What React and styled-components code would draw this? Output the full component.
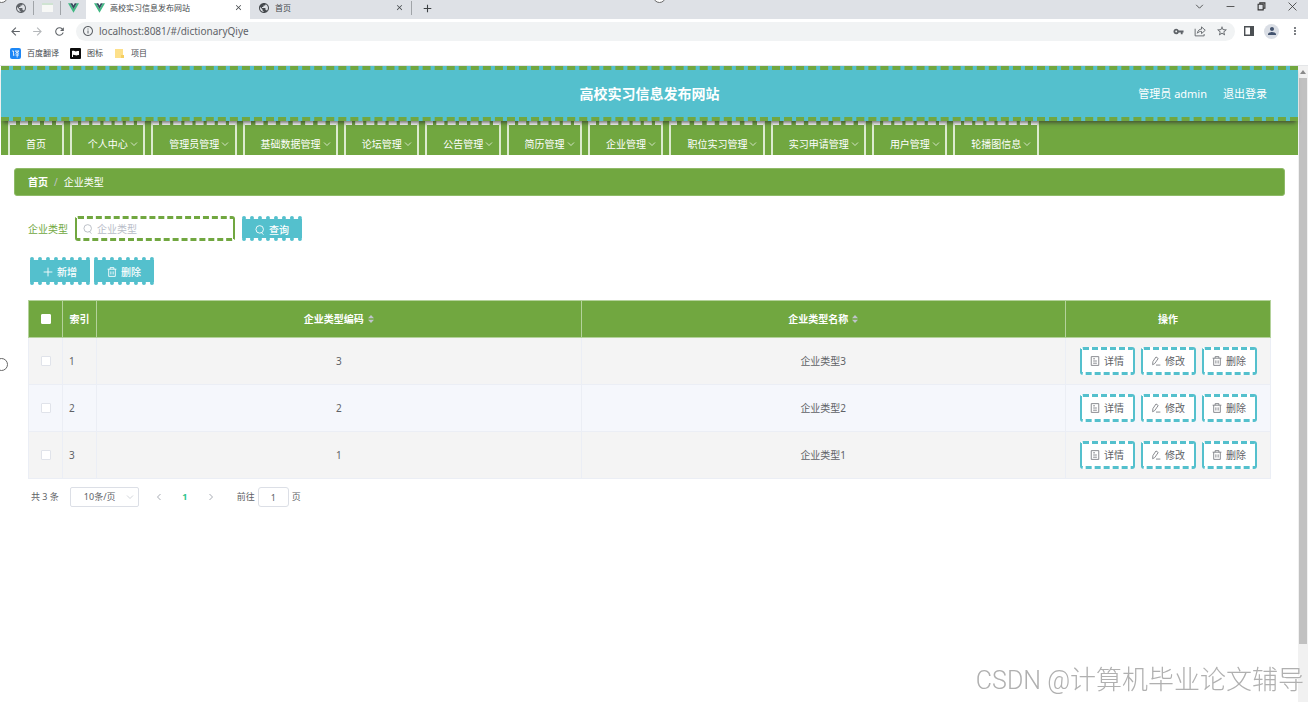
import { useState } from "react";
import styled, { createGlobalStyle, css } from "styled-components";
import {
  MdPublic,
  MdClose,
  MdAdd,
  MdArrowBack,
  MdArrowForward,
  MdRefresh,
  MdInfoOutline,
  MdVpnKey,
  MdStarBorder,
  MdPerson,
  MdMoreVert,
} from "react-icons/md";

const green = "#71a740";
const teal = "#54c0cd";

const GlobalStyle = createGlobalStyle`
  * {
    box-sizing: border-box;
  }

  body {
    margin: 0;
    background: #fff;
    color: #606266;
    font-family: "Noto Sans", "Noto Sans CJK SC", sans-serif;
    font-size: 10px;
    line-height: 14px;
  }

  button, input, select {
    font: inherit;
    color: inherit;
  }

  button {
    padding: 0;
    border: 0;
    background: none;
    cursor: pointer;
  }

  a {
    color: inherit;
    text-decoration: none;
  }

  svg {
    display: block;
    flex: none;
  }
`;

const Window = styled.div`
  display: flex;
  flex-direction: column;
  min-height: 100vh;
`;

/* ---------- browser ---------- */

const TabStrip = styled.div`
  display: flex;
  height: 19px;
  padding-left: 7px;
  background: #dee1e6;
  color: #5f6368;
  font-size: 8px;
`;

const PinnedTab = styled.button`
  display: flex;
  justify-content: center;
  align-items: center;
  width: 27px;
  padding-bottom: 4px;
  position: relative;

  &:nth-child(3) {
    width: 25px;
  }

  &:not(:nth-child(3))::after {
    content: "";
    position: absolute;
    right: 0;
    top: 1px;
    width: 1px;
    height: 14px;
    background: #a0a4a8;
  }
`;

const Tab = styled.div`
  display: flex;
  align-items: center;
  gap: 5px;
  width: ${p => (p.$active ? 164 : 161)}px;
  padding: 0 7px 4px 8px;
  background: ${p => (p.$active ? "#fff" : "transparent")};
  color: #45494d;

  span {
    flex: 1;
    white-space: nowrap;
  }
`;

const NewTab = styled.button`
  height: 14px;
  margin-top: 1px;
  padding: 0 9px;
  border-left: 1px solid #a0a4a8;
  color: #3c4043;
`;

const WindowControls = styled.div`
  display: flex;
  margin-left: auto;
  padding-bottom: 6px;

  button {
    display: flex;
    align-items: center;
    justify-content: center;
    width: 31px;
    color: #333;
  }
`;

const AddressBar = styled.div`
  display: flex;
  align-items: center;
  height: 24px;
  padding: 0 7px 0 9px;
  color: #5f6368;
`;

const NavButtons = styled.div`
  display: flex;
  gap: 9px;
  margin-right: 10px;

  button:nth-child(2) {
    color: #b4b7ba;
  }
`;

const UrlBox = styled.div`
  flex: 1;
  display: flex;
  align-items: center;
  gap: 5px;
  height: 19px;
  padding: 0 7px 0 6px;
  border-radius: 10px;
  background: #f1f3f4;
`;

const UrlInput = styled.input`
  flex: 1;
  min-width: 0;
  padding: 0;
  border: 0;
  outline: 0;
  background: none;
  font-size: 10px;
`;

const IconGroup = styled.div`
  display: flex;
  align-items: center;
  gap: 10px;
`;

const BrowserActions = styled(IconGroup)`
  margin-left: 9px;
`;

const Avatar = styled.button`
  display: grid;
  place-items: center;
  width: 15px;
  height: 15px;
  border-radius: 50%;
  background: #dadee5;
  color: #44546f;
`;

const Bookmarks = styled.div`
  display: flex;
  align-items: center;
  gap: 11px;
  height: 23px;
  padding: 0 10px 2px;
  border-bottom: 1px solid #e4e6e8;
  color: #45494d;
  font-size: 8px;

  a {
    display: flex;
    align-items: center;
    gap: 6px;
  }
`;

/* ---------- site ---------- */

const Viewport = styled.div`
  flex: 1;
  display: flex;
  padding-left: 1px;
`;

const Site = styled.div`
  flex: 1;
  min-width: 0;
`;

const Header = styled.header`
  display: grid;
  grid-template-columns: 1fr auto 1fr;
  align-items: center;
  height: 55px;
  padding: 0 31px;
  border: dashed ${green};
  border-width: 4px 0;
  background: ${teal};
  box-shadow: 0 4px 4px -2px rgba(50, 50, 50, 0.7);
  color: #fff;
  position: relative;
`;

const SiteTitle = styled.h1`
  grid-column: 2;
  margin: 0;
  font-size: 14px;
  line-height: 20px;
`;

const UserArea = styled.div`
  display: flex;
  justify-content: flex-end;
  gap: 16px;
  font-size: 11px;
`;

const Menu = styled.nav`
  background: ${green};
`;

const MenuList = styled.div`
  display: flex;
  gap: 6px;
  width: 80%;
  height: 34px;
  padding-left: 7px;
`;

const MenuItem = styled.a`
  display: flex;
  align-items: center;
  gap: 2px;
  min-width: 0;
  padding: 8px ${p => (p.$plain ? 16 : 6)}px 0 16px;
  border: 2px solid #dcebcf;
  border-top: 4px dashed #fff;
  border-bottom: 0;
  color: #fff;
  white-space: nowrap;
`;

const Breadcrumb = styled.div`
  display: flex;
  align-items: center;
  gap: 6px;
  height: 28px;
  margin: 13px 13px 0;
  padding: 0 13px;
  border: 1px solid #8fba68;
  border-radius: 3px;
  background: ${green};
  color: #fff;

  a {
    font-weight: 700;
  }

  i {
    color: #c0c4cc;
    font-style: normal;
  }
`;

const Content = styled.main`
  padding: 20px 27px 0;
`;

const SearchForm = styled.form`
  display: flex;
  align-items: center;
  gap: 7px;

  label {
    color: ${green};
  }
`;

const SearchField = styled.div`
  display: flex;
  align-items: center;
  gap: 4px;
  width: 160px;
  height: 25px;
  padding: 0 6px;
  border: 2px solid ${green};
  border-top: 3px dashed ${green};
  border-bottom: 3px dashed ${green};
  border-radius: 3px;
  color: #b4b8c0;

  input {
    flex: 1;
    min-width: 0;
    padding: 0;
    border: 0;
    outline: 0;
    color: #606266;
  }

  input::placeholder {
    color: #b8bcc8;
    opacity: 1;
  }
`;

/* the fill runs one pixel under the dots */
const TealButton = styled.button`
  display: flex;
  align-items: center;
  justify-content: center;
  gap: 4px;
  width: 60px;
  height: ${p => (p.$small ? 25 : 28)}px;
  padding-top: ${p => (p.$small ? 3 : 1)}px;
  border: dotted ${teal};
  border-width: 4px 0;
  background: linear-gradient(${teal}, ${teal}) center / 100% calc(100% - 6px) no-repeat border-box;
  color: #fff;
  font-weight: 500;
`;

const Toolbar = styled.div`
  display: flex;
  gap: 4px;
  margin: 16px 0 15px 2px;
`;

const Table = styled.table`
  width: 100%;
  border-collapse: collapse;
  table-layout: fixed;
  text-align: center;
`;

const cell = css`
  padding: 0;
  border: 1px solid #ebeef5;
`;

const Th = styled.th`
  ${cell}
  height: 37px;
  width: ${p => (p.$width ? `${p.$width}px` : "auto")};
  border-color: #b4d29b;
  background: ${green};
  color: #fff;
  font-weight: 700;
`;

const Td = styled.td`
  ${cell}
  height: 47px;
  padding: ${p => (p.$index ? "0 6px" : 0)};
  text-align: ${p => (p.$index ? "left" : "center")};
`;

const Tr = styled.tr`
  background: #f4f4f4;

  &:nth-child(even) {
    background: #f5f7fc;
  }
`;

const SortHead = styled.button`
  display: inline-flex;
  align-items: center;
  gap: 4px;
  font-weight: 700;
`;

const Check = styled.input`
  appearance: none;
  display: block;
  width: 10px;
  height: 10px;
  margin: 0 auto;
  border: 1px solid ${p => (p.$head ? "#fff" : "#e0e3ea")};
  border-radius: 1px;
  background: #fff;

  &:checked {
    background: ${teal};
  }
`;

const RowActions = styled.div`
  display: flex;
  justify-content: center;
  gap: 6px;
`;

const RowButton = styled.button`
  display: flex;
  align-items: center;
  justify-content: center;
  gap: 4px;
  width: 55px;
  height: 28px;
  border: 2px solid ${teal};
  border-top: 3px dashed ${teal};
  border-bottom: 3px dashed ${teal};
  border-radius: 3px;
  background: #fff;

  svg {
    color: #7a7d82;
  }
`;

const Pagination = styled.div`
  display: flex;
  align-items: center;
  height: 20px;
  margin-top: 8px;
  padding-left: 3px;
  font-size: 9px;
`;

const SizeSelect = styled.div`
  display: grid;
  align-items: center;
  width: 69px;
  height: 20px;
  margin: 0 11px;

  select, svg {
    grid-area: 1 / 1;
  }

  select {
    appearance: none;
    height: 20px;
    padding: 0 0 0 13px;
    border: 1px solid #dcdfe6;
    border-radius: 2px;
    background: #fff;
  }

  svg {
    justify-self: end;
    margin-right: 5px;
    color: #c0c4cc;
    pointer-events: none;
  }
`;

const PageButton = styled.button`
  display: grid;
  place-items: center;
  width: 18px;
  margin-right: 8px;
  color: ${p => (p.$active ? "#2fc48d" : "#a8acb4")};
  font-weight: 700;
`;

const Jump = styled.label`
  display: flex;
  align-items: center;
  gap: 3px;
  margin-left: 9px;

  input {
    width: 31px;
    height: 20px;
    padding: 0;
    border: 1px solid #dcdfe6;
    border-radius: 3px;
    text-align: center;
  }
`;

const Scrollbar = styled.div`
  display: flex;
  flex-direction: column;
  align-items: center;
  width: 10px;
  padding-bottom: 58px;
  background: #f1f1f1;

  svg {
    height: 12px;
  }

  &::after {
    content: "";
    flex: 1;
    width: 8px;
    background: #c1c1c1;
  }
`;

const Watermark = styled.div`
  position: fixed;
  right: 4px;
  bottom: 3px;
  color: #b0b0b0;
  font-family: Roboto, "Noto Sans CJK SC", sans-serif;
  font-size: 26px;
  font-weight: 300;
  line-height: 36px;
  text-shadow: -1px -1px 0 #fff;
  pointer-events: none;

  span {
    font-size: 25px;
  }
`;

/* round grips on the window edge */
const Grip = styled.i`
  position: fixed;
  left: ${p => p.$x};
  top: ${p => p.$y};
  width: 13px;
  height: 13px;
  margin: -7px 0 0 -6px;
  border: 1px solid #666;
  border-radius: 50%;
  background: #fff;
`;

/* ---------- icons ---------- */

const Line = ({ size = 10, box = 16, children }) => (
  <svg
    width={size}
    height={size}
    viewBox={`0 0 ${box} ${box}`}
    fill="none"
    stroke="currentColor"
    strokeWidth="1.4"
    aria-hidden="true"
  >
    {children}
  </svg>
);

const Chevron = ({ size = 8 }) => (
  <Line size={size}><path d="M2 5l6 6 6-6" /></Line>
);

const Search = () => (
  <Line><circle cx="7.5" cy="7" r="6" /><path d="M10.500 12.500l3 3" /></Line>
);

const Plus = () => (
  <Line><path d="M8 1v14M1 8h14" /></Line>
);

const Trash = () => (
  <Line>
    <path d="M1 3.5h14M5 3.5V1h6v2.5M2.7 3.5V15h10.6V3.5M6.2 7v5M9.8 7v5" />
  </Line>
);

const Doc = () => (
  <Line>
    <path d="M2 1h12v14H2zM5 4.5h3M5 8h6M5 11.5h6" />
  </Line>
);

const Edit = () => (
  <Line>
    <path d="M3 9l5-7.5 3.500 2.500-5.500 8L2.600 14zM8 14.500h7" />
  </Line>
);

const Sort = () => (
  <svg width="6" height="8" viewBox="0 0 6 8" fill="#c0c4cc" aria-hidden="true">
    <path d="M3 0l3 3.3H0zM3 8l3-3.3H0z" />
  </svg>
);

const Vue = () => (
  <svg width="11" height="10" viewBox="0 0 22 19" aria-hidden="true">
    <path fill="#41b883" d="M0 0h4.5L11 11.3 17.5 0H22L11 19z" />
    <path fill="#35495e" d="M4.5 0h4L11 4.4 13.5 0h4L11 11.3z" />
  </svg>
);

const Sheet = () => (
  <svg width="11" height="9" viewBox="0 0 11 9" aria-hidden="true">
    <path fill="#f7f8f6" d="M0 0h11v9H0z" />
    <path fill="#cfe3d2" d="M0 0h11v2H0z" />
  </svg>
);

const Share = () => (
  <Line size={12}>
    <path
      strokeWidth="1.2"
      d="M1.500 5v9.500h12V12M4.500 11C5 7 7.500 5.500 10 5.500V2.500l5 4.500-5 4.500V8.500C8 8.500 6 9 4.500 11z"
    />
  </Line>
);

const SidePanel = () => (
  <svg width="10" height="10" viewBox="0 0 10 10" aria-hidden="true">
    <path fill="none" stroke="#4c5054" strokeWidth="1.4" d="M.7.7h8.6v8.6H.7z" />
    <path fill="#4c5054" d="M6 1h3.5v8H6z" />
  </svg>
);

const Translate = () => (
  <svg width="11" height="11" viewBox="0 0 11 11" aria-hidden="true">
    <rect width="11" height="11" rx="2" fill="#1d87f5" />
    <path
      d="M2 3h1.500v4.500L4.500 7M5 3h4L5.500 5.500M5.500 3.500L9 5.500M5.500 7h3.500M7.200 5.200V9.500"
      fill="none"
      stroke="#fff"
      strokeWidth=".8"
    />
  </svg>
);

const Flag = () => (
  <svg width="11" height="11" viewBox="0 0 11 11" aria-hidden="true">
    <rect width="11" height="11" rx="1" fill="#0c0c0c" />
    <path fill="#fff" d="M2 3c2-1 3 1 4.500.3S8.500 3 9 3v4c-1.500-.5-2 .7-3.500.3S3.500 6.500 3 7v2H2z" />
  </svg>
);

const Folder = () => (
  <svg width="11" height="11" viewBox="0 0 11 11" aria-hidden="true">
    <path fill="#fde08a" d="M1 1h8v6h1v3H1z" />
    <path fill="#f5cf62" d="M7 7h3v3H7z" />
  </svg>
);

/* ---------- data ---------- */

const menu = [
  "个人中心",
  "管理员管理",
  "基础数据管理",
  "论坛管理",
  "公告管理",
  "简历管理",
  "企业管理",
  "职位实习管理",
  "实习申请管理",
  "用户管理",
  "轮播图信息",
];

const rows = [
  { code: 3, name: "企业类型3" },
  { code: 2, name: "企业类型2" },
  { code: 1, name: "企业类型1" },
];

function Browser() {
  return (
    <>
      <TabStrip>
        <PinnedTab aria-label="网页"><MdPublic size={12} /></PinnedTab>
        <PinnedTab aria-label="表格"><Sheet /></PinnedTab>
        <PinnedTab aria-label="Vue"><Vue /></PinnedTab>
        <Tab $active>
          <Vue />
          <span>高校实习信息发布网站</span>
          <button aria-label="关闭"><MdClose size={9} /></button>
        </Tab>
        <Tab>
          <MdPublic size={12} />
          <span>首页</span>
          <button aria-label="关闭"><MdClose size={9} /></button>
        </Tab>
        <NewTab aria-label="新标签页"><MdAdd size={13} /></NewTab>
        <WindowControls>
          <button aria-label="搜索标签页"><Chevron size={9} /></button>
          <button aria-label="最小化"><Line size={9}><path d="M1 8h14" /></Line></button>
          <button aria-label="还原">
            <Line size={9}><path strokeWidth="2" d="M2 4h9v10H2zM5 4V1.500h9V11h-3" /></Line>
          </button>
          <button aria-label="关闭窗口">
            <Line size={9}><path d="M1 1l14 14M15 1L1 15" /></Line>
          </button>
        </WindowControls>
      </TabStrip>

      <AddressBar>
        <NavButtons>
          <button aria-label="后退"><MdArrowBack size={13} /></button>
          <button aria-label="前进"><MdArrowForward size={13} /></button>
          <button aria-label="刷新"><MdRefresh size={13} /></button>
        </NavButtons>
        <UrlBox>
          <MdInfoOutline size={12} />
          <UrlInput aria-label="地址" defaultValue="localhost:8081/#/dictionaryQiye" />
          <IconGroup>
            <button aria-label="密码"><MdVpnKey size={11} /></button>
            <button aria-label="分享"><Share /></button>
            <button aria-label="收藏"><MdStarBorder size={12} /></button>
          </IconGroup>
        </UrlBox>
        <BrowserActions>
          <button aria-label="侧边栏"><SidePanel /></button>
          <Avatar aria-label="用户"><MdPerson size={12} /></Avatar>
          <button aria-label="更多"><MdMoreVert size={12} /></button>
        </BrowserActions>
      </AddressBar>

      <Bookmarks>
        <a href="#fanyi"><Translate />百度翻译</a>
        <a href="#tubiao"><Flag />图标</a>
        <a href="#xiangmu"><Folder />项目</a>
      </Bookmarks>
    </>
  );
}

export default function App() {
  const [checked, setChecked] = useState([]);

  const toggle = code =>
    setChecked(checked.includes(code) ? checked.filter(c => c !== code) : [...checked, code]);

  const toggleAll = () =>
    setChecked(checked.length === rows.length ? [] : rows.map(r => r.code));

  return (
    <Window>
      <GlobalStyle />
      <Browser />

      <Viewport>
        <Site>
          <Header>
            <SiteTitle>高校实习信息发布网站</SiteTitle>
            <UserArea>
              <span>管理员 admin</span>
              <a href="#logout">退出登录</a>
            </UserArea>
          </Header>

          <Menu>
            <MenuList>
              <MenuItem href="#home" $plain>首页</MenuItem>
              {menu.map(item => (
                <MenuItem href="#menu" key={item}>
                  {item}
                  <Chevron />
                </MenuItem>
              ))}
            </MenuList>
          </Menu>

          <Breadcrumb>
            <a href="#home">首页</a>
            <i>/</i>
            <span>企业类型</span>
          </Breadcrumb>

          <Content>
            <SearchForm onSubmit={e => e.preventDefault()}>
              <label htmlFor="type">企业类型</label>
              <SearchField>
                <Search />
                <input id="type" placeholder="企业类型" />
              </SearchField>
              <TealButton type="submit" $small><Search />查询</TealButton>
            </SearchForm>

            <Toolbar>
              <TealButton><Plus />新增</TealButton>
              <TealButton><Trash />删除</TealButton>
            </Toolbar>

            <Table>
              <thead>
                <tr>
                  <Th $width={34}>
                    <Check
                      type="checkbox"
                      aria-label="全选"
                      $head
                      checked={checked.length === rows.length}
                      onChange={toggleAll}
                    />
                  </Th>
                  <Th $width={34}>索引</Th>
                  <Th><SortHead>企业类型编码<Sort /></SortHead></Th>
                  <Th><SortHead>企业类型名称<Sort /></SortHead></Th>
                  <Th $width={205}>操作</Th>
                </tr>
              </thead>
              <tbody>
                {rows.map((row, i) => (
                  <Tr key={row.code}>
                    <Td>
                      <Check
                        type="checkbox"
                        aria-label={`选择 ${row.name}`}
                        checked={checked.includes(row.code)}
                        onChange={() => toggle(row.code)}
                      />
                    </Td>
                    <Td $index>{i + 1}</Td>
                    <Td>{row.code}</Td>
                    <Td>{row.name}</Td>
                    <Td>
                      <RowActions>
                        <RowButton><Doc />详情</RowButton>
                        <RowButton><Edit />修改</RowButton>
                        <RowButton><Trash />删除</RowButton>
                      </RowActions>
                    </Td>
                  </Tr>
                ))}
              </tbody>
            </Table>

            <Pagination>
              <span>共 3 条</span>
              <SizeSelect>
                <select aria-label="每页条数">
                  <option>10条/页</option>
                  <option>20条/页</option>
                </select>
                <Chevron />
              </SizeSelect>
              <PageButton aria-label="上一页">
                <Line size={8}><path strokeWidth="2" d="M11 2L5 8l6 6" /></Line>
              </PageButton>
              <PageButton $active>1</PageButton>
              <PageButton aria-label="下一页">
                <Line size={8}><path strokeWidth="2" d="M5 2l6 6-6 6" /></Line>
              </PageButton>
              <Jump>
                前往
                <input defaultValue="1" />
                页
              </Jump>
            </Pagination>
          </Content>
        </Site>

        <Scrollbar>
          <svg width="6" height="12" viewBox="0 0 6 12" aria-hidden="true">
            <path fill="#8a8a8a" d="M3 4l3 4H0z" />
          </svg>
        </Scrollbar>
      </Viewport>

      <Watermark><span>CSDN @</span>计算机毕业论文辅导</Watermark>
      <Grip $x="1px" $y="-3px" />
      <Grip $x="50.4%" $y="-3px" />
      <Grip $x="1px" $y="52%" />
    </Window>
  );
}
